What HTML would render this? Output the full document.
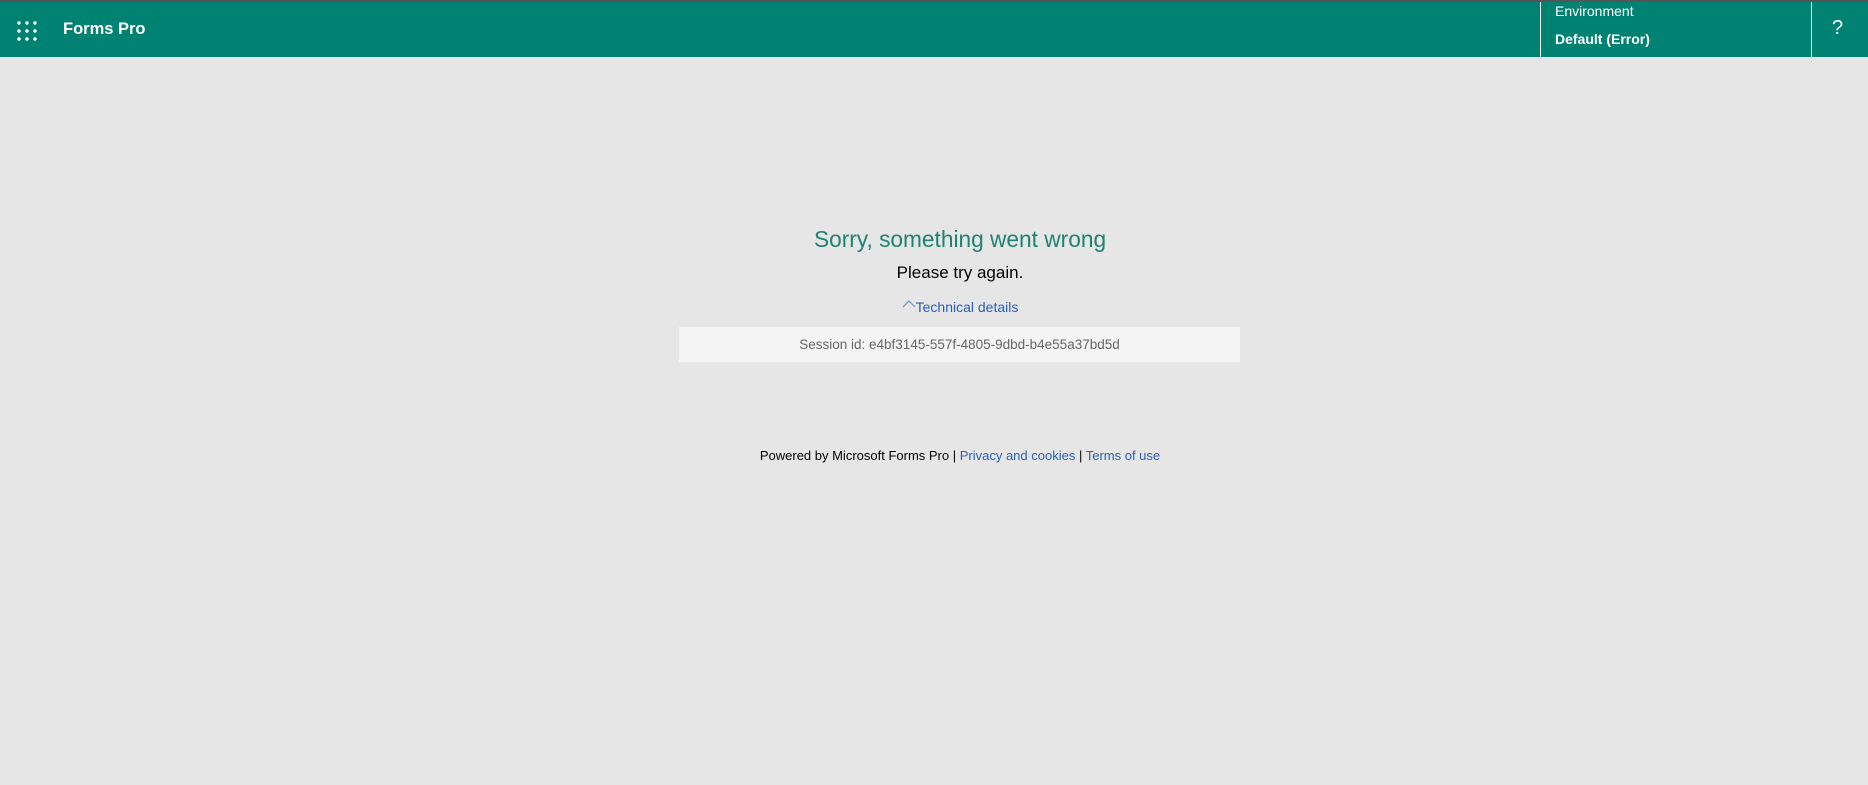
<!DOCTYPE html>
<html><head><style>
body{margin:0;width:1868px;height:785px;background:#e6e6e6;font-family:"Liberation Sans",sans-serif;overflow:hidden;position:relative}
.top{position:absolute;left:0;top:0;width:1868px;height:2px;background:#555}
.hdr{position:absolute;left:0;top:2px;width:1868px;height:55px;background:#008272;color:#fff}
.t{position:absolute;white-space:nowrap}
.c{position:absolute;left:0;width:1920px;text-align:center;white-space:nowrap}
a{color:#2b5fb3;text-decoration:none}
</style></head><body>
<div class="top"></div>
<div class="hdr">
<svg style="position:absolute;left:17px;top:19px" width="20" height="20" viewBox="0 0 20 20" fill="#fff">
<circle cx="2" cy="2" r="1.7"/><circle cx="10" cy="2" r="1.7"/><circle cx="18" cy="2" r="1.7"/>
<circle cx="2" cy="10" r="1.7"/><circle cx="10" cy="10" r="1.7"/><circle cx="18" cy="10" r="1.7"/>
<circle cx="2" cy="18" r="1.7"/><circle cx="10" cy="18" r="1.7"/><circle cx="18" cy="18" r="1.7"/>
</svg>
<div class="t" style="left:63px;top:18px;font-size:16.5px;font-weight:bold">Forms Pro</div>
<div style="position:absolute;left:1540px;top:0;width:1px;height:55px;background:#fff"></div>
<div style="position:absolute;left:1811px;top:0;width:1px;height:55px;background:#fff"></div>
<div class="t" style="left:1555px;top:1px;font-size:14px">Environment</div>
<div class="t" style="left:1555px;top:29px;font-size:14px;font-weight:bold">Default (Error)</div>
<div class="t" style="left:1832px;top:15px;font-size:20px">?</div>
</div>
<div class="c" style="top:226px;font-size:22.7px;color:#1f8272">Sorry, something went wrong</div>
<div class="c" style="top:263px;font-size:17px;color:#000">Please try again.</div>
<div class="c" style="top:299px;font-size:14px;color:#2b5fb3"><svg width="14" height="9" viewBox="0 0 14 9" style="vertical-align:4px"><path d="M1 8L7 2L13 8" fill="none" stroke="#6f8fc8" stroke-width="1.2"/></svg>Technical details</div>
<div style="position:absolute;left:679px;top:327px;width:561px;height:35px;background:#f4f4f4;font-size:13.5px;color:#666;text-align:center;line-height:35px">Session id: e4bf3145-557f-4805-9dbd-b4e55a37bd5d</div>
<div class="c" style="top:448px;font-size:13px;color:#000">Powered by Microsoft Forms Pro | <a>Privacy and cookies</a> | <a>Terms of use</a></div>
</body></html>
